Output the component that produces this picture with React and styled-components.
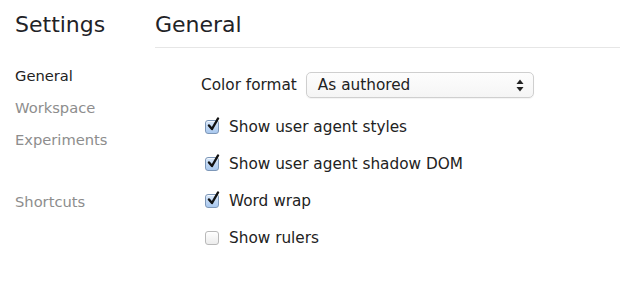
import React from "react";
import styled, { createGlobalStyle } from "styled-components";

const Global = createGlobalStyle`
  html, body {
    margin: 0;
    padding: 0;
    background: #fff;
  }
  body {
    font-family: "DejaVu Sans", "Liberation Sans", sans-serif;
    color: #222;
  }
`;

const Page = styled.div`
  display: flex;
  width: 620px;
  height: 305px;
  overflow: hidden;
`;

const Sidebar = styled.nav`
  width: 155px;
  flex: none;
  padding-left: 15px;
  box-sizing: border-box;
`;

const Title = styled.h1`
  margin: 0;
  height: 48px;
  padding-top: 11px;
  box-sizing: border-box;
  font-size: 22px;
  font-weight: normal;
  line-height: 28px;
  color: #1f2327;
`;

const NavList = styled.ul`
  list-style: none;
  margin: 0;
  padding: 17px 0 0;
`;

const NavItem = styled.li`
  height: 32px;
  line-height: 22px;
  font-size: 14.7px;
  color: ${(p) => (p.$active ? "#222" : "#8d8d8d")};
  margin-top: ${(p) => (p.$gap ? "30px" : "0")};
`;

const Main = styled.main`
  flex: 1;
  display: flex;
  flex-direction: column;
`;

const Header = styled.h2`
  margin: 0;
  height: 48px;
  padding-top: 11px;
  box-sizing: border-box;
  font-size: 22px;
  font-weight: normal;
  line-height: 28px;
  color: #1f2327;
  border-bottom: 1px solid #e6e6e6;
`;

const Content = styled.div`
  padding: 24px 0 0 46px;
  display: flex;
  flex-direction: column;
`;

const FieldRow = styled.label`
  display: flex;
  align-items: center;
  height: 26px;
  font-size: 15.3px;
  gap: 9px;
  margin-bottom: 18px;
`;

const Select = styled.div`
  width: 228px;
  height: 26px;
  box-sizing: border-box;
  border: 1px solid #cfcfcf;
  border-radius: 5px;
  background: linear-gradient(#fdfdfd, #f5f5f5);
  display: flex;
  align-items: center;
  justify-content: space-between;
  padding: 0 9px 0 11px;
  font-size: 15.3px;
  color: #222;
  box-shadow: 0 1px 1px rgba(0, 0, 0, 0.05);
`;

const CheckRow = styled.label`
  display: flex;
  align-items: center;
  height: 22px;
  margin-bottom: 15px;
  margin-left: 4px;
  gap: 10px;
  font-size: 15.3px;
  color: #222;
`;

const Box = styled.span`
  position: relative;
  width: 14px;
  height: 14px;
  box-sizing: border-box;
  border-radius: 3px;
  border: 1px solid ${(p) => (p.$checked ? "#7d97b8" : "#b9b9b9")};
  background: ${(p) =>
    p.$checked
      ? "linear-gradient(#d9e8fa, #a9c8ee)"
      : "linear-gradient(#ffffff, #ececec)"};
  box-shadow: inset 0 1px 0 rgba(255, 255, 255, 0.7);
  flex: none;
`;

const Tick = styled.svg`
  position: absolute;
  left: 1px;
  top: -4px;
`;

const Checkbox = ({ checked }) => (
  <Box $checked={checked}>
    {checked && (
      <Tick width="13" height="15" viewBox="0 0 13 15">
        <path
          d="M2 8.5 L5 12 L11 1.5"
          fill="none"
          stroke="#111"
          strokeWidth="2.4"
          strokeLinecap="round"
          strokeLinejoin="round"
        />
      </Tick>
    )}
  </Box>
);

const Arrows = () => (
  <svg width="8" height="13" viewBox="0 0 8 13">
    <path d="M4 0.5 L7.5 5 H0.5 Z" fill="#222" />
    <path d="M4 12.5 L7.5 8 H0.5 Z" fill="#222" />
  </svg>
);

const options = [
  { label: "Show user agent styles", checked: true },
  { label: "Show user agent shadow DOM", checked: true },
  { label: "Word wrap", checked: true },
  { label: "Show rulers", checked: false },
];

export default function App() {
  return (
    <>
      <Global />
      <Page>
        <Sidebar>
          <Title>Settings</Title>
          <NavList>
            <NavItem $active>General</NavItem>
            <NavItem>Workspace</NavItem>
            <NavItem>Experiments</NavItem>
            <NavItem $gap>Shortcuts</NavItem>
          </NavList>
        </Sidebar>
        <Main>
          <Header>General</Header>
          <Content>
            <FieldRow>
              Color format
              <Select>
                <span>As authored</span>
                <Arrows />
              </Select>
            </FieldRow>
            {options.map((o) => (
              <CheckRow key={o.label}>
                <Checkbox checked={o.checked} />
                {o.label}
              </CheckRow>
            ))}
          </Content>
        </Main>
      </Page>
    </>
  );
}
